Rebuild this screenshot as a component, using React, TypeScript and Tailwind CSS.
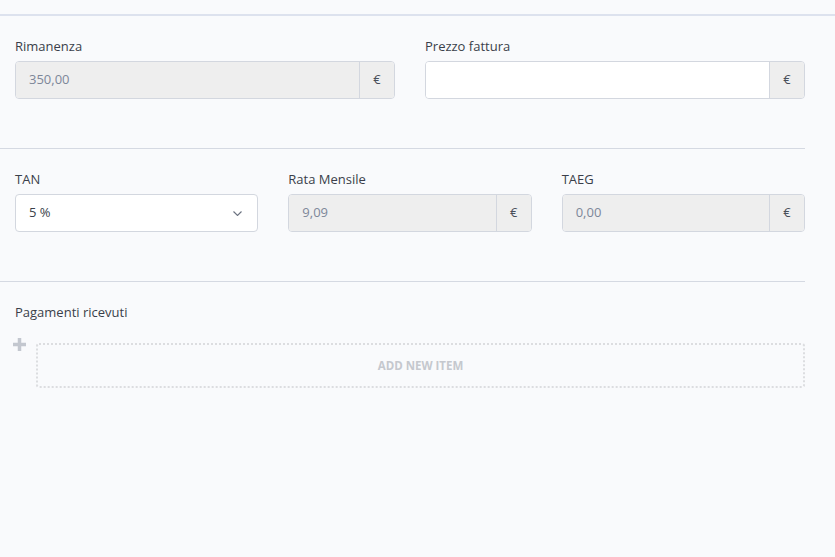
import React from 'react';

const font = { fontFamily: '"Open Sans", "Noto Sans", sans-serif' };

interface FieldProps {
  label: string;
  value?: string;
  disabled?: boolean;
}

const EuroField: React.FC<FieldProps> = ({ label, value = '', disabled }) => (
  <div className="flex-1 min-w-0">
    <div className="text-[13px] leading-5 text-[#3a3f4a] mb-[5px]">{label}</div>
    <div className="flex h-[38px] rounded-[4px] border border-[#d3d7df] overflow-hidden">
      <div
        className={`flex-1 flex items-center px-[13px] text-[13px] ${
          disabled ? 'bg-[#eeeeee] text-[#7d8799]' : 'bg-white text-[#3a3f4a]'
        }`}
      >
        {value}
      </div>
      <div className="w-[35px] flex items-center justify-center border-l border-[#d3d7df] bg-[#eeeeee] text-[13px] text-[#4a4f5a]">
        €
      </div>
    </div>
  </div>
);

const SelectField: React.FC<FieldProps> = ({ label, value = '' }) => (
  <div className="flex-1 min-w-0">
    <div className="text-[13px] leading-5 text-[#3a3f4a] mb-[5px]">{label}</div>
    <div className="flex items-center justify-between h-[38px] rounded-[4px] border border-[#d3d7df] bg-white px-[13px] text-[13px] text-[#3a3f4a]">
      <span>{value}</span>
      <svg width="9" height="5" viewBox="0 0 9 5" fill="none" className="mr-[2px]">
        <path d="M0.5 0.5l4 4 4-4" stroke="#6b7280" strokeWidth="1.1" />
      </svg>
    </div>
  </div>
);

export default function App() {
  return (
    <div className="min-h-[557px] bg-[#f9fafc]" style={font}>
      <div className="h-[16px] border-b-2 border-[#dde2ee]" />
      <div className="pl-[15px] pr-[30px]">
        <div className="flex gap-[30px] pt-[20px]">
          <EuroField label="Rimanenza" value="350,00" disabled />
          <EuroField label="Prezzo fattura" />
        </div>
        <div className="mt-[49px] border-t border-[#d5d9e2] -ml-[15px]" />
        <div className="flex gap-[30px] pt-[20px]">
          <SelectField label="TAN" value="5 %" />
          <EuroField label="Rata Mensile" value="9,09" disabled />
          <EuroField label="TAEG" value="0,00" disabled />
        </div>
        <div className="mt-[49px] border-t border-[#d5d9e2] -ml-[15px]" />
        <div className="pt-[20px]">
          <div className="text-[13px] leading-5 text-[#3a3f4a]">Pagamenti ricevuti</div>
          <div className="flex mt-[16px] -ml-[2px]">
            <div className="w-[23px]">
              <svg width="13" height="13" viewBox="0 0 13 13">
                <path d="M6.5 0v13M0 6.5h13" stroke="#c3c7cf" strokeWidth="3.5" />
              </svg>
            </div>
            <div className="flex-1 mt-[5px] h-[45px] rounded-[3px] border-2 border-dotted border-[#dcdde0] flex items-center justify-center text-[11.5px] font-bold text-[#c5c8ce]">
              ADD NEW ITEM
            </div>
          </div>
        </div>
      </div>
    </div>
  );
}
